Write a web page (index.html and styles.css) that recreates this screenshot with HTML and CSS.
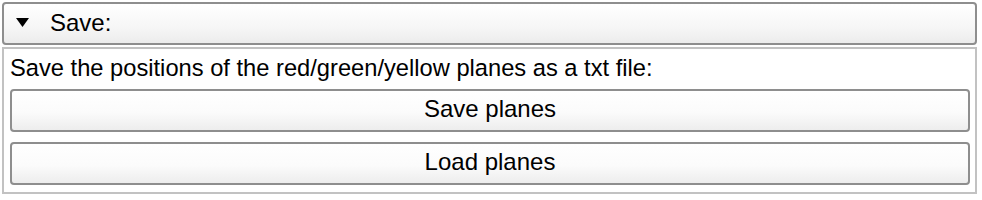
FILE: index.html
```html
<!DOCTYPE html>
<html>
<head>
<meta charset="utf-8">
<link rel="stylesheet" href="styles.css">
</head>
<body>
<div class="group">
  <div class="header">
    <svg class="caret" width="13" height="9" viewBox="0 0 13 9"><polygon points="0,0 13,0 6.5,9" fill="#000"/></svg>
    <span class="title">Save:</span>
  </div>
  <div class="panel">
    <div class="desc">Save the positions of the red/green/yellow planes as a txt file:</div>
    <button class="btn">Save planes</button>
    <button class="btn">Load planes</button>
  </div>
</div>
</body>
</html>
```

FILE: styles.css
```css
html, body {
  margin: 0;
  padding: 0;
  background: #fff;
}
body {
  padding: 2px 5px 0 2px;
  font-family: "Liberation Sans", Arial, Helvetica, sans-serif;
  color: #000;
}
.group {
  display: flex;
  flex-direction: column;
  gap: 2px;
  width: 975px;
}
.header {
  box-sizing: border-box;
  height: 43px;
  border: 2px solid #8e8e8e;
  border-radius: 4px;
  background: linear-gradient(#ffffff, #f6f6f6 60%, #ececec);
  display: flex;
  align-items: center;
  padding: 0 0 1px 12px;
}
.caret {
  display: block;
  margin-right: 21px;
  margin-top: -2px;
}
.title {
  font-size: 24px;
  line-height: 28px;
}
.panel {
  box-sizing: border-box;
  height: 147px;
  border: 2px solid #c2c2c2;
  padding: 5px 5px 7px 6px;
  display: flex;
  flex-direction: column;
}
.desc {
  font-size: 23.7px;
  line-height: 28px;
  margin-bottom: 7px;
  white-space: nowrap;
}
.btn {
  box-sizing: border-box;
  height: 43px;
  margin: 0 0 10px 0;
  border: 2px solid #8e8e8e;
  border-radius: 4px;
  background: linear-gradient(#ffffff, #fbfbfb 55%, #ededed);
  font-family: "Liberation Sans", Arial, Helvetica, sans-serif;
  font-size: 24px;
  line-height: 28px;
  color: #000;
  padding: 0 0 3px 0;
  text-align: center;
}
.btn:last-child {
  margin-bottom: 0;
}
```
